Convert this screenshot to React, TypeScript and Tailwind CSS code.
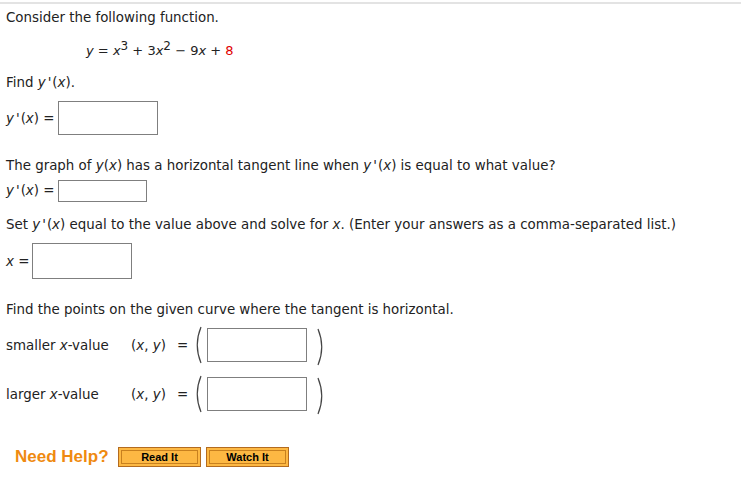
import React from "react";

const font = { fontFamily: '"DejaVu Sans", Verdana, sans-serif' };

function V({ children }: { children: React.ReactNode }) {
  return <i className="italic">{children}</i>;
}

function YPrime() {
  return (
    <span>
      <V>y</V>
      <span className="ml-[2px] mr-[1px] italic">'</span>(<V>x</V>)
    </span>
  );
}

function Box({ w, h }: { w: number; h: number }) {
  return (
    <div
      className="border border-[#7f7f7f] bg-white"
      style={{ width: w, height: h }}
    />
  );
}

function Paren({ right }: { right?: boolean }) {
  return (
    <svg width="10" height="38" viewBox="0 0 10 38" className="shrink-0">
      <path
        d={right ? "M2 1 Q9.5 19 2 37" : "M8 1 Q0.5 19 8 37"}
        fill="none"
        stroke="#444"
        strokeWidth="1.2"
      />
    </svg>
  );
}

function PointRow({ label }: { label: string }) {
  return (
    <div className="flex h-[34px] items-center">
      <div className="w-[131px] pl-[6px] pt-[2px]">
        {label} <V>x</V>-value
      </div>
      <div className="w-[46px] pt-[2px]">
        (<V>x</V>, <V>y</V>)
      </div>
      <div className="w-[16px] pt-[2px]">=</div>
      <Paren />
      <div className="ml-[4px]">
        <Box w={100} h={34} />
      </div>
      <div className="ml-[9px] mt-[4px]">
        <Paren right />
      </div>
    </div>
  );
}

function HelpButton({ label }: { label: string }) {
  return (
    <button
      type="button"
      className="h-[20px] border border-[#b36b1f] bg-[#fdb843] p-[2px]"
      style={{ width: 83 }}
    >
      <div
        className="flex h-full w-full items-center justify-center border border-[#c8801e] text-[11px] font-bold leading-none text-black"
        style={{ fontFamily: '"Liberation Sans", Arial, sans-serif' }}
      >
        {label}
      </div>
    </button>
  );
}

export default function App() {
  return (
    <div className="min-h-screen bg-white text-[13.4px] text-[#222]" style={font}>
      <div className="pt-[2px]">
        <div className="border-t-2 border-[#e3e3e3]" />
      </div>

      <div className="flex h-[26px] items-center pl-[6px] pt-[2px]">
        Consider the following function.
      </div>

      <div className="flex h-[40px] items-center pl-[86px] pt-[2px] text-[13px]">
        <span>
          <V>y</V> = <V>x</V>
          <sup className="relative -top-[5px] text-[12px]">3</sup> + 3<V>x</V>
          <sup className="relative -top-[5px] text-[12px]">2</sup> − 9<V>x</V> +{" "}
          <span className="text-[#e00000]">8</span>
        </span>
      </div>

      <div className="flex h-[24px] items-center pl-[6px] pt-[2px]">
        Find&nbsp;<YPrime />.
      </div>

      <div className="mt-[7px] flex h-[34px] items-center pl-[6px]">
        <div className="w-[52px] pt-[2px]">
          <YPrime /> =
        </div>
        <Box w={100} h={34} />
      </div>

      <div className="mt-[18px] flex h-[24px] items-center pl-[6px] pt-[2px]">
        The graph of&nbsp;<V>y</V>(<V>x</V>)&nbsp;has a horizontal tangent line when&nbsp;
        <YPrime />
        &nbsp;is equal to what value?
      </div>

      <div className="mt-[3px] flex h-[21px] items-center pl-[6px]">
        <div className="w-[52px] pt-[1px]">
          <YPrime /> =
        </div>
        <Box w={89} h={22} />
      </div>

      <div className="mt-[11px] flex h-[24px] items-center pl-[6px] pt-[2px]">
        Set&nbsp;<YPrime />
        &nbsp;equal to the value above and solve for&nbsp;<V>x</V>. (Enter your answers as a
        comma-separated list.)
      </div>

      <div className="mt-[7px] flex h-[36px] items-center pl-[6px]">
        <div className="w-[26px] pt-[2px]">
          <V>x</V> =
        </div>
        <Box w={100} h={36} />
      </div>

      <div className="mt-[18px] flex h-[24px] items-center pl-[6px] pt-[2px]">
        Find the points on the given curve where the tangent is horizontal.
      </div>

      <div className="mt-[7px]">
        <PointRow label="smaller" />
      </div>
      <div className="mt-[15px]">
        <PointRow label="larger" />
      </div>

      <div className="mt-[36px] flex h-[20px] items-center">
        <div
          className="w-[118px] pl-[15px] text-[17px] font-bold text-[#ef8a10]"
          style={{ fontFamily: '"Liberation Sans", Arial, sans-serif' }}
        >
          Need Help?
        </div>
        <HelpButton label="Read It" />
        <div className="ml-[5px]">
          <HelpButton label="Watch It" />
        </div>
      </div>
    </div>
  );
}
